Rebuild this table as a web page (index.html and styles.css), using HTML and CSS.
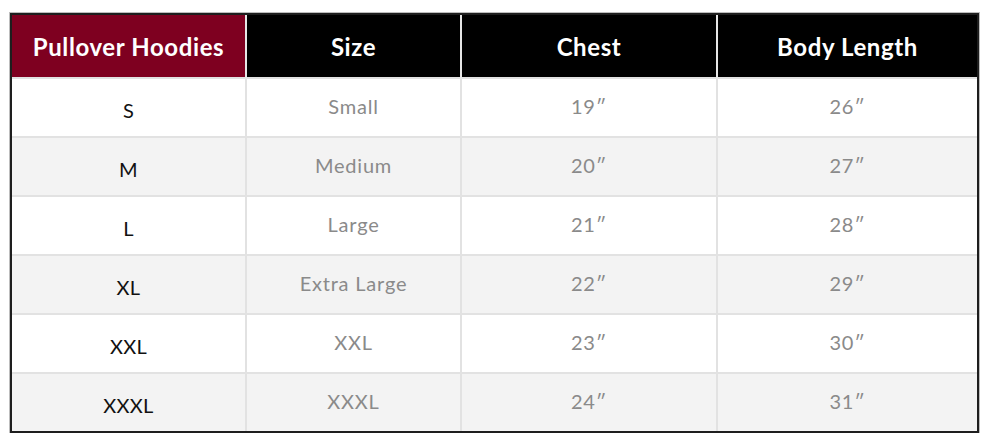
FILE: index.html
```html
<!DOCTYPE html>
<html>
<head>
<meta charset="utf-8">
<link rel="stylesheet" href="styles.css">
</head>
<body>
<div class="frame">
<table class="size-table">
  <colgroup>
    <col class="c1"><col class="c2"><col class="c3"><col class="c4">
  </colgroup>
  <thead>
    <tr>
      <th class="brand">Pullover Hoodies</th>
      <th>Size</th>
      <th>Chest</th>
      <th>Body Length</th>
    </tr>
  </thead>
  <tbody>
    <tr><td class="key">S</td><td>Small</td><td>19″</td><td>26″</td></tr>
    <tr><td class="key">M</td><td>Medium</td><td>20″</td><td>27″</td></tr>
    <tr><td class="key">L</td><td>Large</td><td>21″</td><td>28″</td></tr>
    <tr><td class="key">XL</td><td>Extra Large</td><td>22″</td><td>29″</td></tr>
    <tr><td class="key">XXL</td><td>XXL</td><td>23″</td><td>30″</td></tr>
    <tr><td class="key">XXXL</td><td>XXXL</td><td>24″</td><td>31″</td></tr>
  </tbody>
</table>
</div>
</body>
</html>
```
FILE: styles.css
```css
html, body {
  margin: 0;
  padding: 0;
  background: #fff;
}
body {
  padding: 13px 0 0 10px;
  font-family: Lato, "Open Sans", sans-serif;
}
.frame {
  width: 965px;
  border: 2px solid #1e1e1e;
  box-shadow: 0 0 0 1px #bdbdbd;
}
.size-table {
  width: 965px;
  border-collapse: collapse;
  table-layout: fixed;
}
.c1 { width: 234px; }
.c2 { width: 215px; }
.c3 { width: 256px; }
.c4 { width: 260px; }
.size-table th {
  height: 62px;
  padding: 0;
  background: #000;
  color: #fff;
  font-size: 24px;
  font-weight: 700;
  letter-spacing: 0.6px;
  text-align: center;
  border-left: 2px solid #e6e6e6;
  border-bottom: 1px solid #ddd;
}
.size-table th.brand {
  background: #7e0020;
  border-left: none;
}
.size-table td {
  height: 53px;
  padding: 0 0 4px;
  text-align: center;
  font-size: 20px;
  letter-spacing: 0.8px;
  color: #8a8a8a;
  border: 2px solid #e2e2e2;
}
.size-table td:first-child { border-left: none; }
.size-table td:last-child { border-right: none; }
.size-table tbody tr:last-child td { border-bottom: none; }
.size-table td.key {
  color: #111;
  padding: 4px 0 0;
  letter-spacing: 0.3px;
}
.size-table tbody tr:nth-child(even) td {
  background: #f3f3f3;
}
```
